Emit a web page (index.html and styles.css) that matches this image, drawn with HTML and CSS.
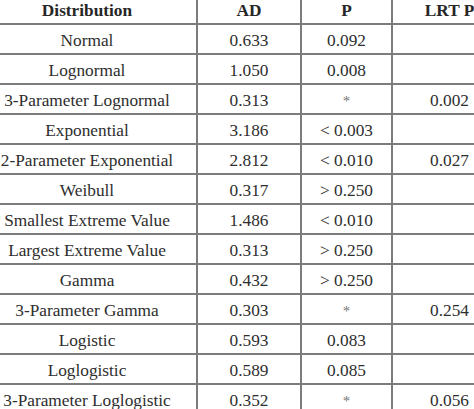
FILE: index.html
```html
<!DOCTYPE html>
<html>
<head>
<meta charset="utf-8">
<link rel="stylesheet" href="styles.css">
</head>
<body>
<div class="frame">
<table class="dist-table">
  <colgroup>
    <col class="c-name">
    <col class="c-ad">
    <col class="c-p">
    <col class="c-lrt">
  </colgroup>
  <thead>
    <tr><th>Distribution</th><th>AD</th><th>P</th><th>LRT P</th></tr>
  </thead>
  <tbody>
    <tr><td>Normal</td><td>0.633</td><td>0.092</td><td></td></tr>
    <tr><td>Lognormal</td><td>1.050</td><td>0.008</td><td></td></tr>
    <tr><td>3-Parameter Lognormal</td><td>0.313</td><td class="star">*</td><td>0.002</td></tr>
    <tr><td>Exponential</td><td>3.186</td><td>&lt; 0.003</td><td></td></tr>
    <tr><td>2-Parameter Exponential</td><td>2.812</td><td>&lt; 0.010</td><td>0.027</td></tr>
    <tr><td>Weibull</td><td>0.317</td><td>&gt; 0.250</td><td></td></tr>
    <tr><td>Smallest Extreme Value</td><td>1.486</td><td>&lt; 0.010</td><td></td></tr>
    <tr><td>Largest Extreme Value</td><td>0.313</td><td>&gt; 0.250</td><td></td></tr>
    <tr><td>Gamma</td><td>0.432</td><td>&gt; 0.250</td><td></td></tr>
    <tr><td>3-Parameter Gamma</td><td>0.303</td><td class="star">*</td><td>0.254</td></tr>
    <tr><td>Logistic</td><td>0.593</td><td>0.083</td><td></td></tr>
    <tr><td>Loglogistic</td><td>0.589</td><td>0.085</td><td></td></tr>
    <tr><td>3-Parameter Loglogistic</td><td>0.352</td><td class="star">*</td><td>0.056</td></tr>
  </tbody>
</table>
</div>
</body>
</html>
```
FILE: styles.css
```css
html, body {
  margin: 0;
  padding: 0;
  background: #ffffff;
}
body {
  font-family: "Liberation Serif", "Times New Roman", serif;
  font-size: 17.3px;
  color: #2e2e2e;
}
.frame {
  width: 474px;
  height: 409px;
  overflow: hidden;
}
.dist-table {
  border-collapse: collapse;
  table-layout: fixed;
  width: 530px;
  margin-top: -7px;
  margin-left: -24px;
}
.c-name { width: 220px; }
.c-ad { width: 104px; }
.c-p { width: 91px; }
.c-lrt { width: 115px; }
.dist-table th,
.dist-table td {
  border: 2px solid #7c7c7c;
  height: 30px;
  padding: 6px 0 0 0;
  box-sizing: border-box;
  line-height: 20px;
  text-align: center;
  vertical-align: top;
  white-space: nowrap;
}
.dist-table th {
  font-weight: bold;
  color: #262626;
}
.dist-table td.star {
  color: #777;
  font-size: 15px;
}
```
